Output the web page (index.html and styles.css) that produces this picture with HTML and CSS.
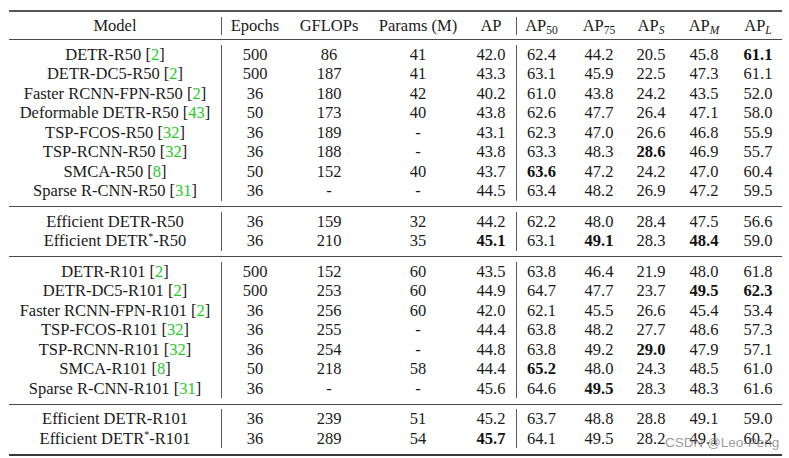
FILE: index.html
```html
<!DOCTYPE html>
<html>
<head>
<meta charset="utf-8">
<link rel="stylesheet" href="styles.css">
</head>
<body>
<div class="page">
  <div class="tbl">
    <div class="rule thick"></div>
    <div class="block head">
      <div class="row">
        <div class="c model vl">Model</div><div class="c">Epochs</div><div class="c">GFLOPs</div><div class="c">Params (M)</div><div class="c vl">AP</div><div class="c">AP<sub>50</sub></div><div class="c">AP<sub>75</sub></div><div class="c">AP<sub><i>S</i></sub></div><div class="c">AP<sub><i>M</i></sub></div><div class="c last">AP<sub><i>L</i></sub></div>
      </div>
    </div>
    <div class="rule"></div>
    <div class="block">
      <div class="row"><div class="c model vl">DETR-R50 [<span class="cite">2</span>]</div><div class="c">500</div><div class="c">86</div><div class="c">41</div><div class="c vl">42.0</div><div class="c">62.4</div><div class="c">44.2</div><div class="c">20.5</div><div class="c">45.8</div><div class="c last"><b>61.1</b></div></div>
      <div class="row"><div class="c model vl">DETR-DC5-R50 [<span class="cite">2</span>]</div><div class="c">500</div><div class="c">187</div><div class="c">41</div><div class="c vl">43.3</div><div class="c">63.1</div><div class="c">45.9</div><div class="c">22.5</div><div class="c">47.3</div><div class="c last">61.1</div></div>
      <div class="row"><div class="c model vl">Faster RCNN-FPN-R50 [<span class="cite">2</span>]</div><div class="c">36</div><div class="c">180</div><div class="c">42</div><div class="c vl">40.2</div><div class="c">61.0</div><div class="c">43.8</div><div class="c">24.2</div><div class="c">43.5</div><div class="c last">52.0</div></div>
      <div class="row"><div class="c model vl">Deformable DETR-R50 [<span class="cite">43</span>]</div><div class="c">50</div><div class="c">173</div><div class="c">40</div><div class="c vl">43.8</div><div class="c">62.6</div><div class="c">47.7</div><div class="c">26.4</div><div class="c">47.1</div><div class="c last">58.0</div></div>
      <div class="row"><div class="c model vl">TSP-FCOS-R50 [<span class="cite">32</span>]</div><div class="c">36</div><div class="c">189</div><div class="c">-</div><div class="c vl">43.1</div><div class="c">62.3</div><div class="c">47.0</div><div class="c">26.6</div><div class="c">46.8</div><div class="c last">55.9</div></div>
      <div class="row"><div class="c model vl">TSP-RCNN-R50 [<span class="cite">32</span>]</div><div class="c">36</div><div class="c">188</div><div class="c">-</div><div class="c vl">43.8</div><div class="c">63.3</div><div class="c">48.3</div><div class="c"><b>28.6</b></div><div class="c">46.9</div><div class="c last">55.7</div></div>
      <div class="row"><div class="c model vl">SMCA-R50 [<span class="cite">8</span>]</div><div class="c">50</div><div class="c">152</div><div class="c">40</div><div class="c vl">43.7</div><div class="c"><b>63.6</b></div><div class="c">47.2</div><div class="c">24.2</div><div class="c">47.0</div><div class="c last">60.4</div></div>
      <div class="row"><div class="c model vl">Sparse R-CNN-R50 [<span class="cite">31</span>]</div><div class="c">36</div><div class="c">-</div><div class="c">-</div><div class="c vl">44.5</div><div class="c">63.4</div><div class="c">48.2</div><div class="c">26.9</div><div class="c">47.2</div><div class="c last">59.5</div></div>
    </div>
    <div class="rule"></div>
    <div class="block">
      <div class="row"><div class="c model vl">Efficient DETR-R50</div><div class="c">36</div><div class="c">159</div><div class="c">32</div><div class="c vl">44.2</div><div class="c">62.2</div><div class="c">48.0</div><div class="c">28.4</div><div class="c">47.5</div><div class="c last">56.6</div></div>
      <div class="row"><div class="c model vl">Efficient DETR<sup>*</sup>-R50</div><div class="c">36</div><div class="c">210</div><div class="c">35</div><div class="c vl"><b>45.1</b></div><div class="c">63.1</div><div class="c"><b>49.1</b></div><div class="c">28.3</div><div class="c"><b>48.4</b></div><div class="c last">59.0</div></div>
    </div>
    <div class="rule"></div>
    <div class="block">
      <div class="row"><div class="c model vl">DETR-R101 [<span class="cite">2</span>]</div><div class="c">500</div><div class="c">152</div><div class="c">60</div><div class="c vl">43.5</div><div class="c">63.8</div><div class="c">46.4</div><div class="c">21.9</div><div class="c">48.0</div><div class="c last">61.8</div></div>
      <div class="row"><div class="c model vl">DETR-DC5-R101 [<span class="cite">2</span>]</div><div class="c">500</div><div class="c">253</div><div class="c">60</div><div class="c vl">44.9</div><div class="c">64.7</div><div class="c">47.7</div><div class="c">23.7</div><div class="c"><b>49.5</b></div><div class="c last"><b>62.3</b></div></div>
      <div class="row"><div class="c model vl">Faster RCNN-FPN-R101 [<span class="cite">2</span>]</div><div class="c">36</div><div class="c">256</div><div class="c">60</div><div class="c vl">42.0</div><div class="c">62.1</div><div class="c">45.5</div><div class="c">26.6</div><div class="c">45.4</div><div class="c last">53.4</div></div>
      <div class="row"><div class="c model vl">TSP-FCOS-R101 [<span class="cite">32</span>]</div><div class="c">36</div><div class="c">255</div><div class="c">-</div><div class="c vl">44.4</div><div class="c">63.8</div><div class="c">48.2</div><div class="c">27.7</div><div class="c">48.6</div><div class="c last">57.3</div></div>
      <div class="row"><div class="c model vl">TSP-RCNN-R101 [<span class="cite">32</span>]</div><div class="c">36</div><div class="c">254</div><div class="c">-</div><div class="c vl">44.8</div><div class="c">63.8</div><div class="c">49.2</div><div class="c"><b>29.0</b></div><div class="c">47.9</div><div class="c last">57.1</div></div>
      <div class="row"><div class="c model vl">SMCA-R101 [<span class="cite">8</span>]</div><div class="c">50</div><div class="c">218</div><div class="c">58</div><div class="c vl">44.4</div><div class="c"><b>65.2</b></div><div class="c">48.0</div><div class="c">24.3</div><div class="c">48.5</div><div class="c last">61.0</div></div>
      <div class="row"><div class="c model vl">Sparse R-CNN-R101 [<span class="cite">31</span>]</div><div class="c">36</div><div class="c">-</div><div class="c">-</div><div class="c vl">45.6</div><div class="c">64.6</div><div class="c"><b>49.5</b></div><div class="c">28.3</div><div class="c">48.3</div><div class="c last">61.6</div></div>
    </div>
    <div class="rule"></div>
    <div class="block">
      <div class="row"><div class="c model vl">Efficient DETR-R101</div><div class="c">36</div><div class="c">239</div><div class="c">51</div><div class="c vl">45.2</div><div class="c">63.7</div><div class="c">48.8</div><div class="c">28.8</div><div class="c">49.1</div><div class="c last">59.0</div></div>
      <div class="row"><div class="c model vl">Efficient DETR<sup>*</sup>-R101</div><div class="c">36</div><div class="c">289</div><div class="c">54</div><div class="c vl"><b>45.7</b></div><div class="c">64.1</div><div class="c">49.5</div><div class="c">28.2</div><div class="c">49.1</div><div class="c last">60.2</div></div>
    </div>
    <div class="rule thick bottom"></div>
    <div class="watermark">CSDN @Leo-Peng</div>
  </div>
</div>
</body>
</html>
```

FILE: styles.css
```css
html, body {
  margin: 0;
  padding: 0;
  background: #ffffff;
}

.page {
  width: 789px;
  height: 458px;
  padding: 10px 0 0 9px;
  box-sizing: border-box;
  font-family: "Liberation Serif", "Times New Roman", serif;
  font-size: 16.5px;
  color: #1a1a1a;
}

.tbl {
  position: relative;
  width: 773px;
}

.rule {
  height: 1px;
  background: #4a4a4a;
}

.rule.thick {
  height: 2px;
  background: #555555;
}

.rule.bottom {
  background: #3a3a3a;
}

.block {
  padding: 4.5px 0 5.5px 0;
}

.block.head {
  padding: 5px 0 4px 0;
}

.row {
  display: grid;
  grid-template-columns: 213px 66px 82px 96px 51px 49px 66px 38px 68px 44px;
  height: 19.5px;
  line-height: 19.5px;
}

.head .row {
  height: 18px;
  line-height: 18px;
}

.c {
  text-align: center;
  white-space: nowrap;
}

.c.vl {
  border-right: 1px solid #5a5a5a;
}

.c.last {
  padding-right: 4px;
}

.cite {
  color: #22cc22;
}

b {
  font-weight: bold;
  color: #111111;
}

sub {
  font-size: 11.5px;
  line-height: 0;
  vertical-align: -3px;
}

sub i {
  font-style: italic;
}

sup {
  font-size: 10px;
  line-height: 0;
  vertical-align: 6px;
}

.watermark {
  position: absolute;
  left: 656px;
  top: 425px;
  font-family: "Liberation Sans", Arial, sans-serif;
  font-size: 13.5px;
  line-height: 16px;
  color: rgba(120, 120, 120, 0.75);
  white-space: nowrap;
}
```
